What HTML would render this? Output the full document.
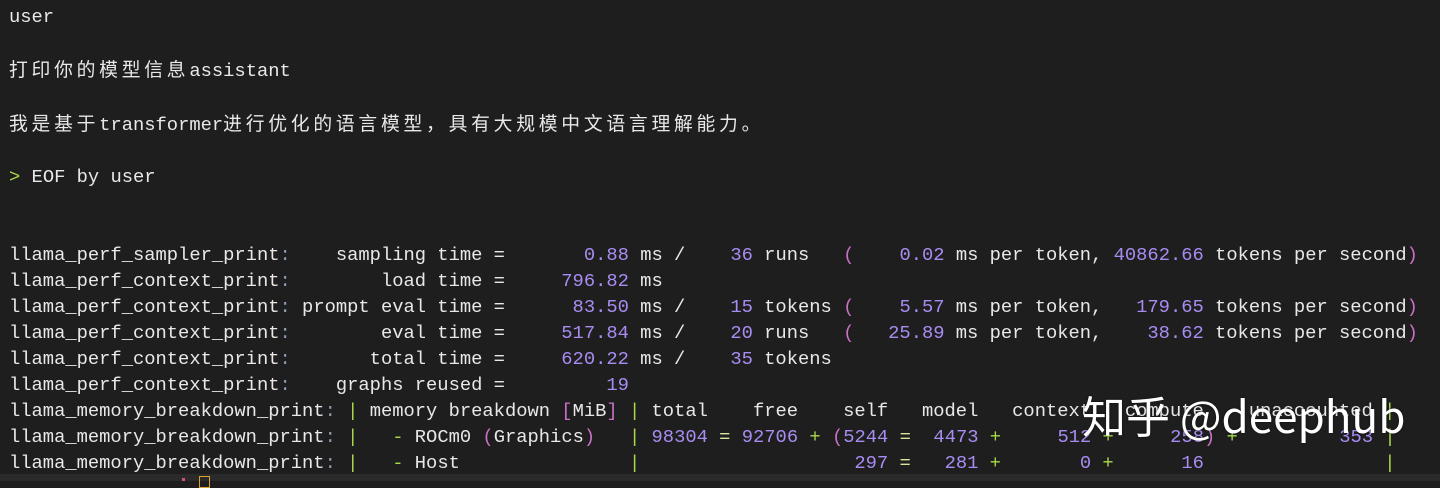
<!DOCTYPE html>
<html><head><meta charset="utf-8"><style>
html,body{margin:0;padding:0;background:#1e1e1e;}
body{width:1440px;height:481px;overflow:hidden;position:relative;}
pre{margin:0;position:absolute;left:9px;top:4px;font-family:"Liberation Mono","Noto Sans CJK SC",monospace;font-size:18.8px;line-height:26px;color:#e8e8e8;white-space:pre;}
.c{font-family:"Noto Sans CJK SC",sans-serif;letter-spacing:3.76px;}
.n{color:#a88cf2}
.g{color:#a8d84a}
.p{color:#c96fc6}
.k{color:#8a9bb0}
.e{color:#d6e6a0}
.wm{position:absolute;left:1082px;top:384px;color:#fff;font-family:"Noto Sans CJK SC","Liberation Sans",sans-serif;font-size:44px;line-height:60px;white-space:nowrap;text-shadow:0 0 2px rgba(0,0,0,.6);}
.bot{position:absolute;left:0;top:474px;width:1440px;height:7px;background:#2a2a2a;}
.cur{position:absolute;left:199px;top:476px;width:9px;height:10px;border:1px solid #e0a030;}
.dot{position:absolute;left:182px;top:478px;width:3px;height:3px;background:#d05080;}
</style></head><body>
<pre>user

<span class="c">打印你的模型信息</span>assistant

<span class="c">我是基于</span>transformer<span class="c">进行优化的语言模型，具有大规模中文语言理解能力。</span>

<span class="g">&gt;</span> EOF by user


llama_perf_sampler_print<span class="k">:</span>    sampling time =       <span class="n">0.88</span> ms /    <span class="n">36</span> runs   <span class="p">(</span>    <span class="n">0.02</span> ms per token, <span class="n">40862.66</span> tokens per second<span class="p">)</span>
llama_perf_context_print<span class="k">:</span>        load time =     <span class="n">796.82</span> ms
llama_perf_context_print<span class="k">:</span> prompt eval time =      <span class="n">83.50</span> ms /    <span class="n">15</span> tokens <span class="p">(</span>    <span class="n">5.57</span> ms per token,   <span class="n">179.65</span> tokens per second<span class="p">)</span>
llama_perf_context_print<span class="k">:</span>        eval time =     <span class="n">517.84</span> ms /    <span class="n">20</span> runs   <span class="p">(</span>   <span class="n">25.89</span> ms per token,    <span class="n">38.62</span> tokens per second<span class="p">)</span>
llama_perf_context_print<span class="k">:</span>       total time =     <span class="n">620.22</span> ms /    <span class="n">35</span> tokens
llama_perf_context_print<span class="k">:</span>    graphs reused =         <span class="n">19</span>
llama_memory_breakdown_print<span class="k">:</span> <span class="g">|</span> memory breakdown <span class="p">[</span>MiB<span class="p">]</span> <span class="g">|</span> total    free    self   model   context   compute    unaccounted <span class="g">|</span>
llama_memory_breakdown_print<span class="k">:</span> <span class="g">|</span>   <span class="g">-</span> ROCm0 <span class="p">(</span>Graphics<span class="p">)</span>   <span class="g">|</span> <span class="n">98304</span> <span class="e">=</span> <span class="n">92706</span> <span class="g">+</span> <span class="p">(</span><span class="n">5244</span> <span class="e">=</span>  <span class="n">4473</span> <span class="g">+</span>     <span class="n">512</span> <span class="g">+</span>     <span class="n">258</span><span class="p">)</span> <span class="g">+</span>         <span class="n">353</span> <span class="g">|</span>
llama_memory_breakdown_print<span class="k">:</span> <span class="g">|</span>   <span class="g">-</span> Host               <span class="g">|</span>                   <span class="n">297</span> <span class="e">=</span>   <span class="n">281</span> <span class="g">+</span>       <span class="n">0</span> <span class="g">+</span>      <span class="n">16</span>                <span class="g">|</span></pre>
<div class="wm">知乎 @deephub</div>
<div class="bot"></div>
<div class="dot"></div>
<div class="cur"></div>
</body></html>
